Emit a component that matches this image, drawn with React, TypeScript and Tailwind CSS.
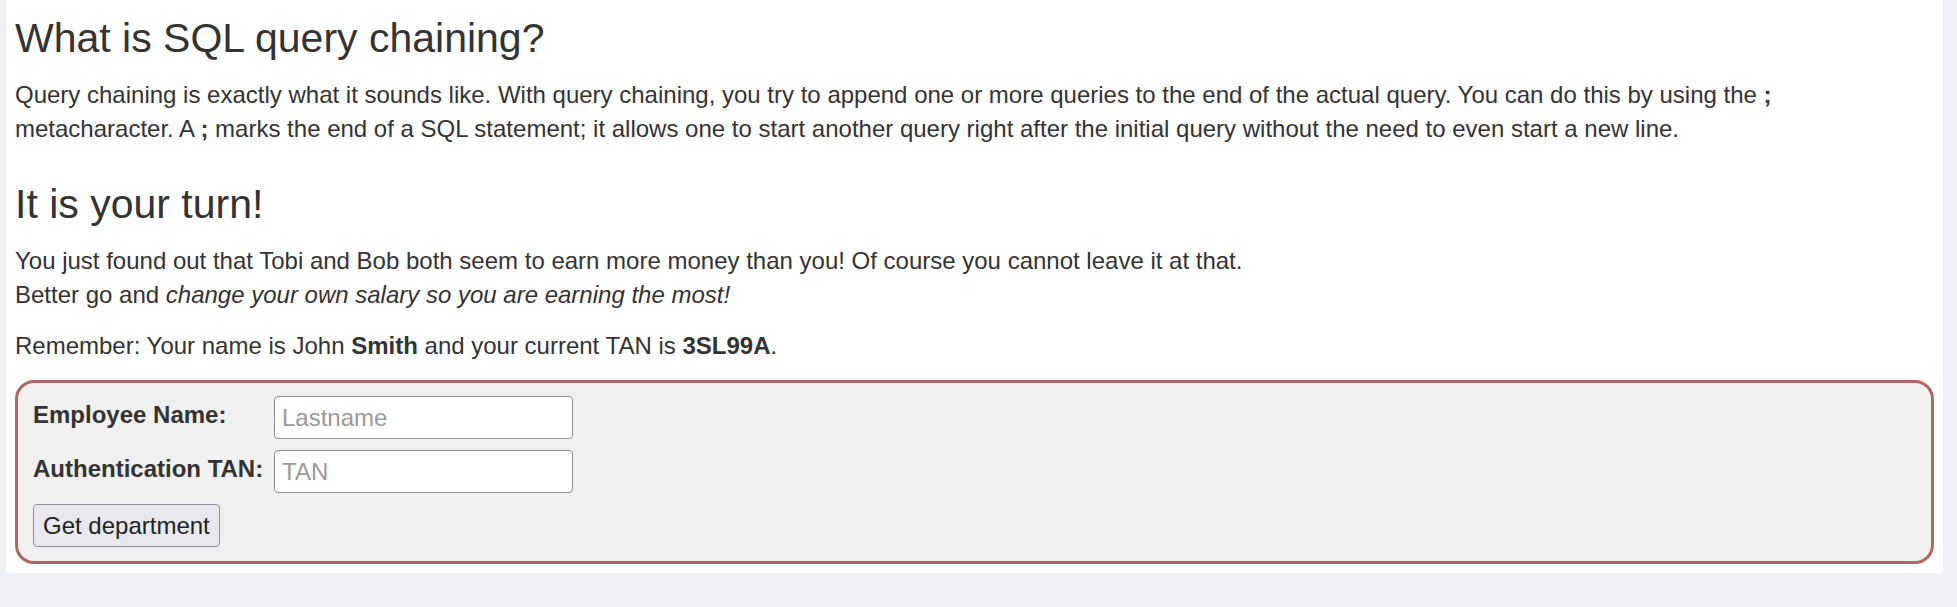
export default function App() {
  return (
    <div className="min-h-[607px] bg-[#eff0f5] font-['Liberation_Sans',Arial,sans-serif] text-[#333]">
      <div className="ml-[6px] w-[1937px] rounded-b-[4px] bg-white px-[9px] pt-[16px] pb-[9px]">
        <h3 className="text-[41px] font-normal leading-[45px]">What is SQL query chaining?</h3>
        <p className="mt-[17px] text-[24px] leading-[34px]">
          Query chaining is exactly what it sounds like. With query chaining, you try to append one or more
          queries to the end of the actual query. You can do this by using the <b>;</b> metacharacter. A <b>;</b>{' '}
          marks the end of a SQL statement; it allows one to start another query right after the initial query
          without the need to even start a new line.
        </p>

        <h3 className="mt-[36px] text-[41px] font-normal leading-[45px]">It is your turn!</h3>
        <p className="mt-[17px] text-[24px] leading-[34px]">
          You just found out that Tobi and Bob both seem to earn more money than you! Of course you cannot leave
          it at that.
          <br />
          Better go and <em>change your own salary so you are earning the most!</em>
        </p>
        <p className="mt-[17px] text-[24px] leading-[34px]">
          Remember: Your name is John <b>Smith</b> and your current TAN is <b>3SL99A</b>.
        </p>

        <form
          className="mt-[17px] flex flex-col gap-[11px] rounded-[19px] border-[3px] border-[#b06666] bg-[#f0f0f0] px-[15px] pt-[13px] pb-[14px]"
          onSubmit={(e) => e.preventDefault()}
        >
          <div className="flex items-center">
            <label className="mb-[6px] w-[241px] text-[24px] font-bold leading-[34px]">Employee Name:</label>
            <input
              type="text"
              placeholder="Lastname"
              className="h-[43px] w-[299px] rounded-[4px] border border-[#8f8f9d] bg-white px-[7px] text-[24px] outline-none placeholder:text-[#999]"
            />
          </div>
          <div className="flex items-center">
            <label className="mb-[6px] w-[241px] text-[24px] font-bold leading-[34px]">Authentication TAN:</label>
            <input
              type="text"
              placeholder="TAN"
              className="h-[43px] w-[299px] rounded-[4px] border border-[#8f8f9d] bg-white px-[7px] text-[24px] outline-none placeholder:text-[#999]"
            />
          </div>
          <div className="flex">
            <button
              type="submit"
              className="h-[43px] rounded-[4px] border border-[#8f8f9d] bg-[#e9e9ed] px-[9px] text-[24px] text-[#222]"
            >
              Get department
            </button>
          </div>
        </form>
      </div>
    </div>
  )
}
